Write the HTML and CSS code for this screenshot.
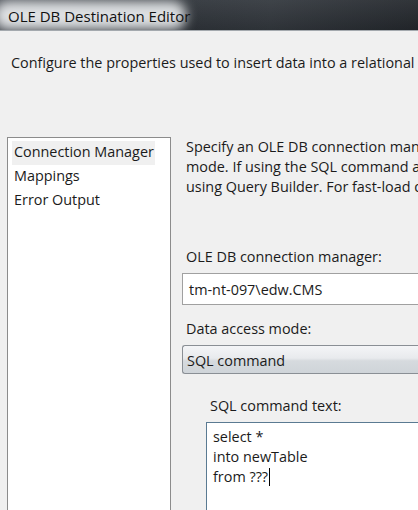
FILE: index.html
```html
<!DOCTYPE html>
<html lang="en">
  <head>
    <meta charset="UTF-8" />
    <title>OLE DB Destination Editor</title>
    <link rel="stylesheet" href="styles.css">
  </head>
  <body>
    <div class="titlebar">
      <div class="title-glow"></div>
      <span class="title-text">OLE DB Destination Editor</span>
    </div>

    <div class="intro">Configure the properties used to insert data into a relational database</div>

    <div class="main">
      <!-- left nav -->
      <div class="nav-list">
        <div class="nav-item selected">Connection Manager</div>
        <div class="nav-item">Mappings</div>
        <div class="nav-item">Error Output</div>
      </div>

      <!-- right pane -->
      <div class="pane">
        <div class="pane-desc">
          Specify an OLE DB connection manager, a data source, or a data source view, and select the data access<br>
          mode. If using the SQL command access mode, specify the SQL command either by typing the query or by<br>
          using Query Builder. For fast-load data access, set the table update options.
        </div>

        <div class="field-label">OLE DB connection manager:</div>
        <div class="text-box">tm-nt-097\edw.CMS</div>

        <div class="field-label">Data access mode:</div>
        <div class="combo">SQL command</div>

        <div class="sql-block">
          <div class="field-label">SQL command text:</div>
          <div class="sql-box">
            <div>select *</div>
            <div>into newTable</div>
            <div>from ???<span class="caret"></span></div>
          </div>
        </div>
      </div>
    </div>
  </body>
</html>
```

FILE: styles.css
```css
* {
  margin: 0;
  padding: 0;
  box-sizing: border-box;
}

body {
  width: 418px;
  height: 510px;
  overflow: hidden;
  background: #f0f0f0;
  color: #1b1b1b;
  font-family: "Open Sans", "Noto Sans", sans-serif;
  font-size: 14.4px;
  white-space: nowrap;
}

/* title bar */
.titlebar {
  position: relative;
  height: 31px;
  background: linear-gradient(180deg, rgba(255, 255, 255, 0.06), rgba(0, 0, 0, 0.1)),
    linear-gradient(90deg, #41464d 0%, #2d3238 35%, #33383e 65%, #24282d 100%);
  border-bottom: 1px solid #a4a9ae;
  overflow: hidden;
}

.title-glow {
  position: absolute;
  left: -6px;
  top: 1px;
  width: 192px;
  height: 29px;
  border-radius: 14px;
  background: rgba(236, 238, 240, 0.92);
  filter: blur(6px);
}

.title-text {
  position: relative;
  display: block;
  padding: 6px 0 0 8px;
  font-size: 15px;
  color: #111;
}

.intro {
  padding: 22px 0 0 11px;
  height: 106px;
  overflow: hidden;
}

.main {
  display: flex;
}

.nav-list {
  flex-shrink: 0;
  width: 164px;
  height: 380px;
  margin-left: 7px;
  background: #fff;
  border: 1px solid #8c8c8c;
  padding: 3px 0 0 4px;
}

.nav-item {
  height: 24px;
  line-height: 22px;
  padding-left: 2px;
  width: 143px;
}

.nav-item.selected {
  background: #f0f0f0;
}

.pane {
  flex: 1;
  min-width: 0;
  overflow: hidden;
  padding-left: 11px;
}

.pane-desc {
  padding: 0 0 0 4px;
  line-height: 20px;
  height: 110px;
}

.field-label {
  padding-left: 4px;
  height: 26px;
  line-height: 20px;
}

.text-box {
  height: 32px;
  background: #fff;
  border: 1px solid #a0a0a0;
  border-right: none;
  padding: 6px 0 0 6px;
  margin-bottom: 14px;
}

.combo {
  height: 29px;
  border: 1px solid #8a8f95;
  border-right: none;
  border-radius: 3px 0 0 3px;
  background: linear-gradient(#f4f5f7 0%, #e8eaed 45%, #d6dade 55%, #cfd4d9 100%);
  padding: 5px 0 0 4px;
}

.sql-block {
  padding: 22px 0 0 24px;
}

.sql-box {
  height: 90px;
  background: #fff;
  border: 1px solid #5a7a92;
  border-right: none;
  border-bottom: none;
  padding: 4px 0 0 6px;
  line-height: 20px;
}

.caret {
  display: inline-block;
  width: 1px;
  height: 18px;
  background: #000;
  vertical-align: -4px;
  margin-left: 1px;
}
```
